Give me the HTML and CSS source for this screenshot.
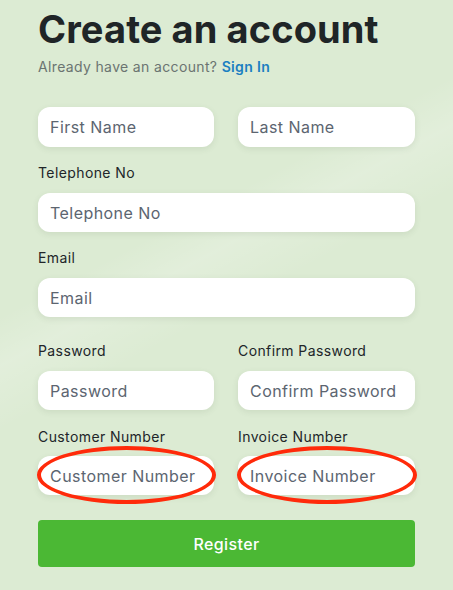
FILE: index.html
```html
<!DOCTYPE html>
<html lang="en">
<head>
<meta charset="utf-8">
<title>Create an account</title>
<link rel="stylesheet" href="styles.css">
</head>
<body>
<main class="page">
  <h1 class="title">Create an account</h1>
  <p class="subtitle">Already have an account? <a class="link" href="#">Sign In</a></p>
  <form class="form">
    <div class="row row-first">
      <input class="field field-tall" type="text" placeholder="First Name">
      <input class="field field-tall" type="text" placeholder="Last Name">
    </div>
    <label class="label">Telephone No</label>
    <input class="field" type="tel" placeholder="Telephone No">
    <label class="label">Email</label>
    <input class="field" type="email" placeholder="Email">
    <div class="row row-pass">
      <div class="col">
        <label class="label">Password</label>
        <input class="field" type="password" placeholder="Password">
      </div>
      <div class="col">
        <label class="label">Confirm Password</label>
        <input class="field" type="password" placeholder="Confirm Password">
      </div>
    </div>
    <div class="row row-num">
      <div class="col">
        <label class="label label-tight">Customer Number</label>
        <div class="circled"><input class="field" type="text" placeholder="Customer Number"></div>
      </div>
      <div class="col">
        <label class="label label-tight">Invoice Number</label>
        <div class="circled"><input class="field" type="text" placeholder="Invoice Number"></div>
      </div>
    </div>
    <button class="btn" type="button">Register</button>
  </form>
</main>
</body>
</html>
```

FILE: styles.css
```css
* { box-sizing: border-box; }
html, body { margin: 0; padding: 0; }
body {
  width: 453px;
  height: 590px;
  overflow: hidden;
  font-family: Inter, "Noto Sans", sans-serif;
  background-color: #dcebd3;
  background-image:
    linear-gradient(152deg, rgba(255,255,255,0) 0%, rgba(255,255,255,0) 38%, rgba(255,255,255,0.18) 44%, rgba(255,255,255,0) 52%, rgba(255,255,255,0) 100%);
}
.page {
  padding: 0 38px;
  width: 453px;
}
.title {
  margin: 5px 0 0;
  font-size: 38px;
  line-height: 48px;
  font-weight: 700;
  color: #1f2527;
  letter-spacing: 0.1px;
}
.subtitle {
  margin: 4px 0 0;
  font-size: 14px;
  line-height: 20px;
  color: #6b7471;
  letter-spacing: 0.35px;
}
.link {
  color: #1a7fc1;
  font-weight: 600;
  text-decoration: none;
}
.form {
  display: flex;
  flex-direction: column;
  margin-top: 30px;
}
.row {
  display: grid;
  grid-template-columns: 176px 177px;
  column-gap: 24px;
}
.col { display: flex; flex-direction: column; }
.field {
  display: block;
  width: 100%;
  height: 39px;
  border: none;
  outline: none;
  border-radius: 12px;
  background: #fff;
  padding: 0 12px;
  font-family: inherit;
  font-size: 16px;
  letter-spacing: 0.45px;
  color: #333;
  box-shadow: 0 2px 6px rgba(60, 80, 50, 0.10);
}
.field-tall { height: 40px; }
.field::placeholder { color: #5c6570; opacity: 1; }
.label {
  display: block;
  margin: 16px 0 10px;
  font-size: 14px;
  line-height: 20px;
  color: #212529;
  letter-spacing: 0.4px;
}
.row-pass { margin-top: 8px; }
.label-tight { margin: 17px 0 9px; }
.circled { position: relative; }
.circled::after {
  content: "";
  position: absolute;
  left: -1px;
  right: -2px;
  top: -10px;
  bottom: -9px;
  border: 4px solid #ff2a0a;
  border-radius: 50%;
  pointer-events: none;
}
.btn {
  margin-top: 25px;
  height: 47px;
  width: 100%;
  border: none;
  border-radius: 4px;
  background: #4bb834;
  color: #fff;
  font-family: inherit;
  font-size: 16px;
  font-weight: 500;
  letter-spacing: 0.4px;
}
```
